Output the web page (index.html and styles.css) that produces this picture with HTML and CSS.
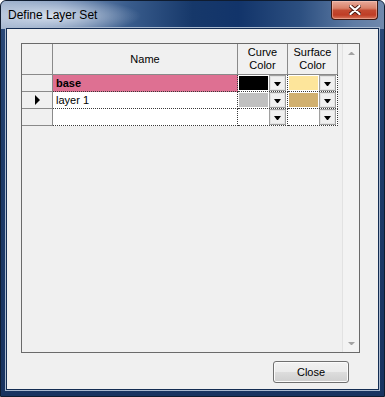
FILE: index.html
```html
<!DOCTYPE html>
<html lang="en">
<head>
    <meta charset="UTF-8">
    <title>Define Layer Set</title>
    <link rel="stylesheet" href="styles.css">
</head>
<body>
    <div class="window">
        <div class="titlebar">
            <span class="title">Define Layer Set</span>
            <button class="close-x" type="button" aria-label="Close">
                <svg width="12" height="10" viewBox="0 0 12 10">
                    <path d="M1.5 1 L10.5 9 M10.5 1 L1.5 9" stroke="#4a1a12" stroke-width="4" stroke-linecap="round"/>
                    <path d="M1.5 1 L10.5 9 M10.5 1 L1.5 9" stroke="#ffffff" stroke-width="2.2" stroke-linecap="round"/>
                </svg>
            </button>
        </div>
        <div class="client">
            <div class="grid">
                <div class="cells">
                    <div class="hcell"></div>
                    <div class="hcell">Name</div>
                    <div class="hcell">Curve<br>Color</div>
                    <div class="hcell">Surface<br>Color</div>

                    <div class="rowhdr"></div>
                    <div class="cell name selected">base</div>
                    <div class="cell color"><span class="swatch sw-black"></span><span class="drop"><i></i></span></div>
                    <div class="cell color"><span class="swatch sw-cream"></span><span class="drop"><i></i></span></div>

                    <div class="rowhdr current"><i></i></div>
                    <div class="cell name">layer 1</div>
                    <div class="cell color"><span class="swatch sw-gray"></span><span class="drop"><i></i></span></div>
                    <div class="cell color"><span class="swatch sw-tan"></span><span class="drop"><i></i></span></div>

                    <div class="rowhdr"></div>
                    <div class="cell name"></div>
                    <div class="cell color"><span class="swatch"></span><span class="drop"><i></i></span></div>
                    <div class="cell color"><span class="swatch"></span><span class="drop"><i></i></span></div>
                </div>
                <div class="vscroll">
                    <span class="arrow-up"></span>
                    <span class="arrow-down"></span>
                </div>
            </div>
            <div class="actions">
                <button class="btn" type="button">Close</button>
            </div>
        </div>
    </div>
</body>
</html>
```

FILE: styles.css
```css
body {
    margin: 0;
    background: #ffffff;
    font-family: "Liberation Sans", Arial, sans-serif;
    font-size: 11px;
    color: #000;
}
.window {
    width: 385px;
    height: 397px;
    box-sizing: border-box;
    border: 1px solid #0f1c30;
    border-radius: 6px 6px 0 0;
    padding: 0 6px 7px;
    background: linear-gradient(to bottom, #2c4b7a 0%, #1d3b69 40%, #183360 100%);
    display: flex;
    flex-direction: column;
}
.titlebar {
    height: 28px;
    margin: 0 -6px;
    padding: 0 6px 0 7px;
    display: flex;
    justify-content: space-between;
    align-items: flex-start;
    border-radius: 5px 5px 0 0;
    background:
        radial-gradient(ellipse 90px 18px at 50px 15px, rgba(226, 233, 243, 0.85), rgba(200, 212, 230, 0)),
        linear-gradient(to right, #9fb2cd 0%, #7f98bc 15%, #3a5d8d 33%, #16386a 50%, #12346a 62%, #2c4f80 78%, #5f7ca5 92%, #7089ad 100%);
}
.title {
    font-size: 12px;
    line-height: 29px;
}
.close-x {
    width: 47px;
    height: 19px;
    padding: 0;
    border: 1px solid #3d1811;
    border-top: none;
    border-radius: 0 0 4px 4px;
    background: linear-gradient(to bottom, #e7ab9c 0%, #d98169 40%, #c34a31 52%, #bf3d25 78%, #d7765c 100%);
    box-shadow: inset 0 0 0 1px rgba(255, 210, 195, 0.45);
    display: flex;
    align-items: center;
    justify-content: center;
}
.client {
    flex: 1;
    background: #f0f0f0;
    box-shadow: 0 0 0 1px #132c52, 0 0 0 2px #a9b9cf;
    padding: 14px 18px 0 14px;
    display: flex;
    flex-direction: column;
}
.grid {
    width: 339px;
    height: 310px;
    box-sizing: border-box;
    border: 1px solid #6a6a6a;
    background: #f0f0f0;
    display: flex;
    justify-content: space-between;
}
.cells {
    display: grid;
    grid-template-columns: 31px 185px 50px 50px;
    grid-template-rows: 31px;
    grid-auto-rows: 17px;
    align-content: start;
}
.cells > div {
    box-sizing: border-box;
}
.hcell {
    background: #f0f0f0;
    border-right: 1px solid #8a8a8a;
    border-bottom: 1px solid #8a8a8a;
    display: flex;
    align-items: center;
    justify-content: center;
    text-align: center;
    line-height: 13px;
}
.rowhdr {
    background: #f0f0f0;
    border-right: 1px solid #8a8a8a;
    border-bottom: 1px solid #8a8a8a;
}
.rowhdr.current {
    display: flex;
    align-items: center;
    padding-left: 13px;
}
.rowhdr.current i {
    width: 0;
    height: 0;
    border-top: 5px solid transparent;
    border-bottom: 5px solid transparent;
    border-left: 5px solid #000;
}
.cell {
    background: #ffffff;
    border-right: 1px dotted #3a3a3a;
    border-bottom: 1px dotted #3a3a3a;
}
.name {
    padding-left: 3px;
    line-height: 16px;
}
.name.selected {
    background: #de7092;
    font-weight: bold;
}
.color {
    display: flex;
    align-items: center;
    gap: 1px;
    padding: 0 1px;
}
.swatch {
    width: 29px;
    height: 14px;
}
.sw-black { background: #000000; }
.sw-cream { background: #fde59b; }
.sw-gray { background: #c0c0c0; }
.sw-tan { background: #d1b06f; }
.drop {
    width: 17px;
    height: 16px;
    box-sizing: border-box;
    border: 1px solid #a0a0a0;
    box-shadow: inset 0 0 0 1px #e3e3e3;
    background: #f0f0f0;
    display: flex;
    align-items: center;
    justify-content: center;
    padding-top: 2px;
}
.drop i {
    width: 1px;
    height: 0;
    border-left: 3px solid transparent;
    border-right: 3px solid transparent;
    border-top: 4px solid #000;
}
.vscroll {
    width: 17px;
    box-sizing: border-box;
    background: #f3f3f3;
    border-left: 1px solid #e2e2e2;
    display: flex;
    flex-direction: column;
    justify-content: space-between;
    align-items: center;
    padding: 8px 0 7px;
}
.arrow-up, .arrow-down {
    width: 1px;
    height: 0;
    border-left: 3px solid transparent;
    border-right: 3px solid transparent;
}
.arrow-up {
    border-bottom: 3px solid #a3a3a3;
}
.arrow-down {
    border-top: 3px solid #a3a3a3;
}
.actions {
    display: flex;
    justify-content: flex-end;
    padding-right: 11px;
    margin-top: 8px;
}
.btn {
    width: 76px;
    height: 22px;
    padding: 0;
    font-family: "Liberation Sans", Arial, sans-serif;
    font-size: 11px;
    color: #000;
    border: 1px solid #707070;
    border-radius: 3px;
    background: linear-gradient(to bottom, #f2f2f2 0%, #ebebeb 50%, #dddddd 50%, #cfcfcf 100%);
    box-shadow: inset 0 0 0 1px #fbfbfb;
}
```
